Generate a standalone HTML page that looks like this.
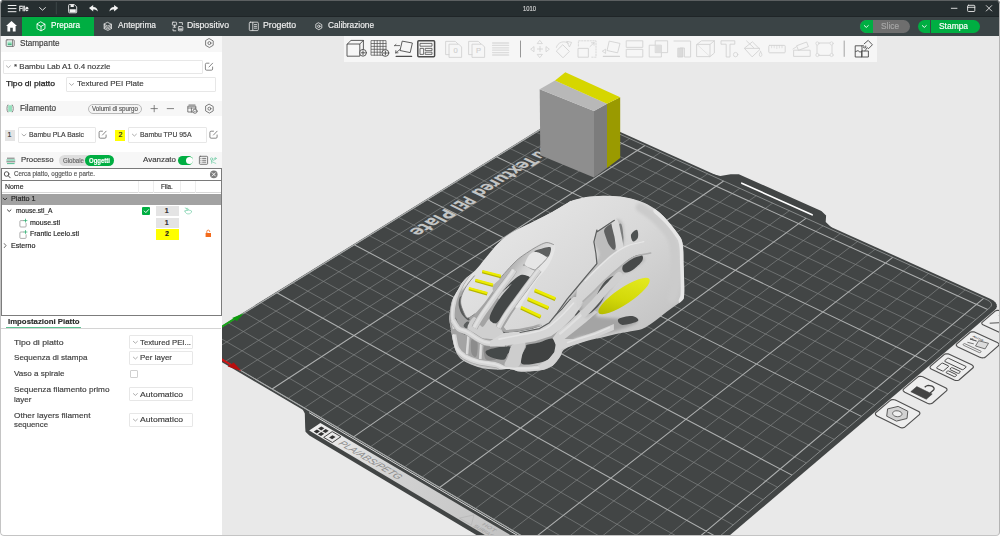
<!DOCTYPE html>
<html lang="it"><head><meta charset="utf-8"><title>1010</title>
<style>
*{box-sizing:border-box;margin:0;padding:0}
html,body{width:1000px;height:536px;overflow:hidden;background:#fff}
body{font-family:"Liberation Sans",sans-serif;font-size:9px;color:#333;position:relative}
#win{position:absolute;left:0;top:0;width:1000px;height:536px;border-radius:4px;overflow:hidden;background:#e9e9e9}
#frame{position:absolute;left:0;top:0;width:1000px;height:536px;border-radius:4px;border:1px solid #c4c4c4;border-top-color:#5c6061;border-right-color:#b4b4b4;pointer-events:none}
#frameL{position:absolute;left:0;top:3px;width:1px;height:33px;background:#878b8c}
.abs{position:absolute}
#title{position:absolute;left:0;top:0;width:1000px;height:17px;background:#262e30}
#tabs{position:absolute;left:0;top:17px;width:1000px;height:19px;background:#3b4446}
.tab{position:absolute;top:0;height:19px;line-height:19px;color:#f2f2f2;font-size:9.6px;white-space:nowrap}
#side{position:absolute;left:0;top:36px;width:222px;height:500px;background:#fff}
.hdr{position:absolute;left:0;width:222px;background:#f7f7f7}
.t{position:absolute;white-space:nowrap;line-height:1;-webkit-text-stroke:0.16px currentColor}
.combo{position:absolute;border:1px solid #e7e7e7;border-radius:1px;background:#fff}
svg{position:absolute;overflow:visible}
</style></head><body>
<div id="win">
<svg id="scene" width="1000" height="536" viewBox="0 0 1000 536" style="left:0;top:0">
<defs><clipPath id="cv"><rect x="222" y="36" width="778" height="500"/></clipPath></defs>
<g clip-path="url(#cv)">
<path d="M994.8,310.0L996.3,308.2L996.9,306.3L996.5,304.2L995.3,302.2L993.3,300.4L990.7,298.9L579.8,113.8L577.2,112.9L574.3,112.4L571.3,112.3L568.3,112.7L565.6,113.4L563.3,114.5L201.9,338.1L199.5,339.9L198.0,341.9L197.4,344.0L197.6,346.1L198.8,348.1L200.8,349.7L630.2,602.7L633.6,604.2L637.5,605.1L641.5,605.2L645.5,604.6L649.0,603.3L652.0,601.4Z" fill="#424545"/>
<path d="M710.4,173.6L720.3,176.0L730.7,174.3L738.8,174.2L821.4,211.1L826.1,215.6L825.7,222.0L832.9,228.8Z" fill="#424545"/>
<path d="M741.8,183.2L812.1,214.8" stroke="#fff" stroke-width="1.6" stroke-linecap="round" fill="none"/>
<path d="M302.5,409.0L304.8,413.5L305.2,427.7L305.5,431.7L309.4,435.4L710.6,674.7L727.5,659.3Z" fill="#424545"/>
<defs><linearGradient id="strip" gradientUnits="userSpaceOnUse" x1="310" y1="425" x2="500" y2="530"><stop offset="0" stop-color="#f0f0f0"/><stop offset="0.45" stop-color="#d2d2d2"/><stop offset="1" stop-color="#c4c4c4"/></linearGradient></defs>
<path d="M320.4,422.9L724.9,661.7L714.2,671.4L309.2,430.5Z" fill="url(#strip)"/>
<path d="M309.2,412.7L727.7,659.2" stroke="#e6e6e6" stroke-width="0.9" fill="none"/>
<path d="M210.0,352.4L584.4,118.2M211.6,333.1L655.2,591.0M225.3,361.4L599.3,124.9M228.2,322.8L671.2,577.4M240.7,370.5L614.4,131.7M244.6,312.7L687.0,564.0M256.3,379.7L629.6,138.6M260.9,302.6L702.6,550.8M288.1,398.3L660.3,152.5M292.7,282.9L733.2,524.9M304.2,407.8L675.9,159.5M308.4,273.2L748.2,512.2M320.5,417.4L691.7,166.6M323.8,263.6L763.0,499.6M337.0,427.1L707.6,173.8M339.1,254.2L777.6,487.3M370.4,446.8L739.8,188.3M369.2,235.6L806.3,463.0M387.4,456.8L756.2,195.7M384.0,226.4L820.3,451.1M404.6,466.9L772.7,203.1M398.6,217.4L834.2,439.4M422.0,477.2L789.3,210.7M413.1,208.4L847.9,427.8M457.4,498.0L823.1,225.9M441.5,190.8L874.7,405.1M475.4,508.6L840.3,233.6M455.5,182.2L887.9,393.9M493.6,519.3L857.6,241.4M469.3,173.6L900.9,382.9M512.0,530.1L875.1,249.3M483.0,165.2L913.8,372.0M549.4,552.1L910.5,265.3M509.9,148.5L939.0,350.6M568.5,563.3L928.5,273.5M523.1,140.3L951.4,340.1M587.7,574.7L946.7,281.7M536.2,132.2L963.7,329.8M607.2,586.1L965.1,289.9M549.2,124.2L975.8,319.5" stroke="#808383" stroke-width="0.7" fill="none"/>
<path d="M194.8,343.5L569.6,111.5M194.8,343.5L638.9,604.8M272.1,389.0L644.9,145.5M276.9,292.7L718.0,537.7M353.6,436.9L723.6,181.0M354.3,244.8L792.0,475.1M439.6,487.5L806.2,218.2M427.3,199.6L861.4,416.4M530.6,541.0L892.7,257.3M496.5,156.8L926.5,361.2M626.9,597.7L983.6,298.3M562.0,116.2L987.7,309.4" stroke="#adafaf" stroke-width="1.05" fill="none"/>
<path d="M990.1,307.4L991.1,306.2L991.5,304.9L991.3,303.6L990.5,302.2L989.1,301.0L987.4,300.0L575.5,114.2L573.8,113.6L571.9,113.3L569.9,113.2L567.9,113.5L566.1,113.9L564.6,114.7L201.6,339.3L200.0,340.5L199.0,341.9L198.6,343.3L198.8,344.7L199.5,346.0L200.9,347.0L630.9,600.1L633.2,601.1L635.8,601.7L638.5,601.8L641.1,601.4L643.5,600.5L645.4,599.2Z" stroke="#a4a6a6" stroke-width="0.7" fill="none"/>
<g id="platetext">
<text transform="matrix(-1.3027,0.8196,-1.4979,-0.6935,571.96,128.82)" x="0" y="0" font-family="'DejaVu Sans','Liberation Sans',sans-serif" font-weight="700" font-size="11.0" textLength="31.8" lengthAdjust="spacingAndGlyphs" fill="#c2c4c4">Bambu</text>
<text transform="matrix(-1.3586,0.8548,-1.5057,-0.7234,528.54,156.00)" x="0" y="0" font-family="'DejaVu Sans','Liberation Sans',sans-serif" font-weight="700" font-size="11.0" textLength="42.8" lengthAdjust="spacingAndGlyphs" fill="#c2c4c4">Textured</text>
<text transform="matrix(-1.4050,0.8841,-1.5112,-0.7482,465.60,195.50)" x="0" y="0" font-family="'DejaVu Sans','Liberation Sans',sans-serif" font-weight="700" font-size="11.0" textLength="11.8" lengthAdjust="spacingAndGlyphs" fill="#c2c4c4">PEI</text>
<text transform="matrix(-1.4390,0.9055,-1.5148,-0.7664,445.43,208.12)" x="0" y="0" font-family="'DejaVu Sans','Liberation Sans',sans-serif" font-weight="700" font-size="11.0" textLength="25.8" lengthAdjust="spacingAndGlyphs" fill="#c2c4c4">Plate</text>
<text transform="matrix(1.7044,1.0095,-1.6907,1.1916,337.63,443.96)" font-family="'Liberation Sans',sans-serif" font-style="italic" font-weight="400" font-size="4.6" textLength="35.5" lengthAdjust="spacingAndGlyphs" fill="#8a8a8a">PLA/ABS/PETG</text>
<text transform="matrix(1.8345,1.0840,-1.6718,1.2793,481.48,524.78)" font-family="'Liberation Sans',sans-serif" font-style="normal" font-weight="700" font-size="2.6" textLength="7.0" lengthAdjust="spacingAndGlyphs" fill="#aaaaaa">HOT</text>
<text transform="matrix(1.8363,1.0890,-1.6783,1.2851,472.77,526.44)" font-family="'Liberation Sans',sans-serif" font-style="normal" font-weight="700" font-size="2.6" textLength="12.0" lengthAdjust="spacingAndGlyphs" fill="#aaaaaa">SURFACE</text>
<path d="M321.3,426.4L324.4,428.3L321.2,430.5L318.1,428.6Z" fill="#333"/>
<path d="M316.9,429.4L320.0,431.3L316.8,433.5L313.7,431.6Z" fill="#333"/>
<path d="M325.6,429.0L328.7,430.8L325.5,433.0L322.4,431.2Z" fill="#333"/>
<path d="M321.2,432.0L324.3,433.8L321.1,436.1L317.9,434.2Z" fill="#333"/>
<path d="M332.2,431.6L340.9,436.7L332.4,442.5L323.7,437.4Z" fill="none" stroke="#333" stroke-width="0.9"/>
<path d="M332.5,435.2L335.5,437.0L332.1,439.3L329.1,437.6Z" fill="#333"/>
<path d="M459.5,518.1L471.3,525.1L474.0,514.9Z" fill="none" stroke="#b4b4b4" stroke-width="0.7"/>
</g>
<g id="plateicons">
<path d="M918.2,411.2L919.1,411.8L919.7,412.5L919.9,413.2L919.8,413.9L919.3,414.6L905.1,426.9L904.3,427.4L903.2,427.7L902.1,427.8L900.9,427.6L899.8,427.2L877.0,415.9L876.2,415.3L875.6,414.6L875.4,413.9L875.5,413.1L876.0,412.5L890.3,400.4L891.1,399.9L892.1,399.6L893.3,399.5L894.5,399.7L895.5,400.1Z" fill="#eeeeee" stroke="#505050" stroke-width="1.15"/>
<path d="M907.0,418.5L896.4,421.1L886.7,416.2L887.6,408.9L898.1,406.4L907.8,411.2Z" fill="#d2d2d2" stroke="#5a5a5a" stroke-width="1"/>
<path d="M901.2,415.6L900.2,416.2L898.9,416.6L897.4,416.7L896.0,416.5L894.6,416.0L893.6,415.3L892.9,414.4L892.6,413.5L892.8,412.6L893.4,411.8L894.4,411.2L895.7,410.8L897.1,410.8L898.6,411.0L899.9,411.5L901.0,412.2L901.7,413.0L902.0,413.9L901.8,414.8L901.2,415.6Z" fill="#efefef" stroke="#5a5a5a" stroke-width="0.9"/>
<path d="M945.4,387.7L946.2,388.2L946.8,388.9L947.0,389.6L946.9,390.3L946.4,390.9L932.6,403.0L931.8,403.4L930.8,403.7L929.7,403.8L928.5,403.6L927.4,403.2L904.8,392.2L903.9,391.6L903.4,391.0L903.1,390.2L903.3,389.5L903.8,388.9L917.7,377.1L918.5,376.6L919.5,376.4L920.6,376.3L921.7,376.5L922.8,376.8Z" fill="#eeeeee" stroke="#505050" stroke-width="1.15"/>
<path d="M916.8,386.6L932.2,394.1L926.3,399.2L910.8,391.7Z" fill="#444" stroke="#444" stroke-width="0.6"/>
<path d="M930.1,393.0L933.3,390.3L933.8,389.6L934.1,388.9L934.0,388.2L933.6,387.4L932.9,386.8L932.0,386.2L930.9,385.8L929.7,385.6L928.5,385.5L927.4,385.7L926.4,386.0L925.6,386.5L924.7,387.3" fill="none" stroke="#444" stroke-width="1.3"/>
<path d="M971.7,364.8L972.5,365.4L973.1,366.0L973.4,366.7L973.3,367.4L972.8,368.0L959.3,379.7L958.6,380.2L957.6,380.5L956.4,380.5L955.3,380.4L954.2,380.0L931.7,369.2L930.8,368.7L930.3,368.1L930.0,367.4L930.2,366.7L930.6,366.1L944.2,354.5L945.0,354.1L945.9,353.8L947.1,353.8L948.2,353.9L949.2,354.3Z" fill="#eeeeee" stroke="#505050" stroke-width="1.15"/>
<path d="M965.8,366.4L966.2,366.7L966.0,367.2L963.3,369.5L962.7,369.7L962.0,369.6L944.9,361.5L944.5,361.1L944.7,360.7L947.4,358.4L948.0,358.2L948.7,358.3Z" fill="none" stroke="#4c4c4c" stroke-width="1.0"/>
<path d="M948.3,365.8L948.7,366.1L948.6,366.5L943.5,370.9L942.9,371.1L942.3,370.9L936.9,368.4L936.5,368.0L936.6,367.6L941.7,363.3L942.2,363.1L942.9,363.2Z" fill="none" stroke="#4c4c4c" stroke-width="1.0"/>
<path d="M960.0,371.3L960.4,371.7L960.3,372.1L959.1,373.2L958.5,373.4L957.8,373.3L950.3,369.7L949.9,369.3L950.0,368.9L951.2,367.8L951.8,367.6L952.5,367.8Z" fill="none" stroke="#4c4c4c" stroke-width="1.0"/>
<path d="M956.3,374.6L956.7,375.0L956.6,375.4L955.3,376.5L954.7,376.7L954.0,376.5L946.5,372.9L946.1,372.6L946.2,372.1L947.5,371.1L948.1,370.9L948.8,371.0Z" fill="none" stroke="#4c4c4c" stroke-width="1.0"/>
<path d="M997.3,342.6L998.2,343.1L998.8,343.7L999.0,344.4L998.9,345.1L998.5,345.7L985.4,357.1L984.6,357.6L983.6,357.8L982.5,357.9L981.4,357.7L980.3,357.4L957.9,346.9L957.1,346.4L956.5,345.7L956.2,345.0L956.4,344.4L956.8,343.8L970.0,332.5L970.8,332.1L971.8,331.8L972.9,331.8L974.0,331.9L975.0,332.3Z" fill="#eeeeee" stroke="#505050" stroke-width="1.15"/>
<path d="M978.7,340.7L988.5,343.3L985.1,348.9L975.5,346.0Z" fill="#dcdcdc" stroke="#555" stroke-width="0.8"/>
<path d="M980.8,351.1L981.2,351.4L981.1,351.8L980.3,352.5L979.8,352.7L979.1,352.5L963.4,345.2L963.0,344.8L963.1,344.4L963.9,343.8L964.4,343.6L965.1,343.8Z" fill="none" stroke="#555" stroke-width="0.7"/>
<path d="M970.1,339.0L976.5,341.0L970.1,339.0L973.2,338.8" fill="none" stroke="#555" stroke-width="0.8"/>
<path d="M967.4,342.3L973.8,343.9" fill="none" stroke="#555" stroke-width="0.8"/>
<path d="M1022.4,320.9L1023.2,321.4L1023.8,322.0L1024.1,322.7L1024.0,323.3L1023.5,323.9L1010.7,335.0L1010.0,335.5L1009.0,335.8L1007.9,335.8L1006.8,335.7L1005.8,335.3L983.5,325.1L982.6,324.6L982.1,324.0L981.8,323.3L981.9,322.6L982.4,322.1L995.2,311.1L996.0,310.7L996.9,310.4L998.0,310.4L999.1,310.5L1000.2,310.9Z" fill="#eeeeee" stroke="#505050" stroke-width="1.15"/>
<path d="M999.2,315.1L1004.9,330.2M1014.4,322.0L989.7,323.2" fill="none" stroke="#555" stroke-width="1"/>
<text transform="matrix(1.9004,0.8798,-1.2171,1.0390,972.16,336.72)" font-family="'Liberation Sans',sans-serif" font-size="1.9" font-weight="700" fill="#555">AUTO</text>
</g>
<g id="axes">
<path d="M194.8,343.5L235.6,318.2" stroke="#19a519" stroke-width="2.0" stroke-linecap="butt"/>
<polygon points="232.1,318.1 243.8,313.2 237.0,321.0" fill="#0e9a0e"/>
<path d="M194.8,343.5L232.2,365.5" stroke="#d01414" stroke-width="2.0" stroke-linecap="butt"/>
<polygon points="227.6,366.5 241.5,370.9 233.7,362.6" fill="#b80e0e"/>
</g>
<g id="cube">
<polygon points="539.7,89.2 594,111 594,177.5 540.3,155.3" fill="#8e8e8e"/>
<polygon points="594,111 607,103.8 607,168 594,177.5" fill="#7c7c7c"/>
<polygon points="607,103.8 620.2,97.3 620.2,158 607,168" fill="#9a9a00"/>
<polygon points="539.7,89.2 555,80.4 607,103.8 594,111" fill="#b8b8b8"/>
<polygon points="555,80.4 565.3,72.3 620.2,97.3 607,103.8" fill="#d6d600"/>
</g>

<g id="mouse">
<defs>
<linearGradient id="mg" gradientUnits="userSpaceOnUse" x1="500" y1="215" x2="620" y2="370"><stop offset="0" stop-color="#e6e6e6"/><stop offset="0.5" stop-color="#d8d8d8"/><stop offset="1" stop-color="#c2c2c2"/></linearGradient>
<linearGradient id="ye" gradientUnits="userSpaceOnUse" x1="642" y1="280" x2="606" y2="312"><stop offset="0" stop-color="#e4ea20"/><stop offset="0.6" stop-color="#d2d808"/><stop offset="1" stop-color="#b4ba00"/></linearGradient>
<linearGradient id="sideg" gradientUnits="userSpaceOnUse" x1="640" y1="220" x2="690" y2="300"><stop offset="0" stop-color="#dcdcdc"/><stop offset="1" stop-color="#e8e8e8"/></linearGradient>
<filter id="b1" x="-20%" y="-20%" width="140%" height="140%"><feGaussianBlur stdDeviation="1.6"/></filter><filter id="b0" x="-20%" y="-20%" width="140%" height="140%"><feGaussianBlur stdDeviation="0.45"/></filter>
<clipPath id="msil"><path d="M570.0,201.2C568.1,202.3 563.7,205.2 559.4,207.7C555.1,210.2 549.5,213.5 544.5,216.1C539.5,218.8 534.5,221.1 529.6,223.6C524.6,226.1 519.0,228.6 514.6,231.0C510.3,233.5 506.9,235.7 503.4,238.5C500.0,241.3 497.2,244.4 494.1,247.8C491.0,251.3 487.9,255.3 484.8,259.0C481.7,262.8 478.9,266.7 475.4,270.2C472.0,273.7 467.2,276.7 464.3,280.0C461.3,283.3 459.7,286.8 457.7,290.3C455.7,293.7 453.4,297.3 452.1,300.5C450.9,303.8 450.7,306.7 450.3,309.9C449.8,313.0 449.2,315.8 449.3,319.2C449.5,322.6 450.6,326.6 451.2,330.4C451.8,334.1 452.3,338.1 453.1,341.6C453.8,345.0 454.6,348.1 455.9,350.9C457.1,353.7 458.2,356.2 460.5,358.4C462.9,360.5 466.4,362.4 469.9,364.0C473.3,365.5 476.7,366.8 481.0,367.7C485.4,368.6 491.0,369.3 496.0,369.6C500.9,369.8 506.9,368.8 510.9,369.2C514.9,369.5 516.4,371.3 519.9,371.6C523.3,372.0 528.1,371.6 531.8,371.3C535.5,371.1 538.8,371.1 542.2,370.1C545.7,369.2 549.7,367.9 552.7,365.7C555.7,363.4 558.2,359.5 560.1,356.7C562.1,354.0 561.4,351.5 564.6,349.3C567.9,347.0 574.6,345.0 579.6,343.3C584.5,341.6 590.9,340.0 594.5,339.1C598.1,338.2 597.5,338.7 601.0,337.8C604.6,337.0 611.0,335.2 616.0,334.1C620.9,333.0 626.5,332.2 630.9,331.3C635.2,330.4 639.0,330.0 642.1,328.9C645.2,327.8 646.4,326.9 649.6,324.8C652.7,322.7 657.0,319.2 660.7,316.4C664.5,313.6 668.4,310.6 671.9,308.0C675.5,305.3 680.2,302.7 682.2,300.5C684.2,298.3 683.8,298.3 684.1,294.9C684.4,291.5 684.2,285.3 684.1,280.0C684.0,274.7 683.7,268.6 683.5,263.4C683.4,258.1 683.5,252.5 683.1,248.4C682.8,244.4 682.5,242.1 681.3,239.1C680.0,236.2 677.8,233.7 675.7,230.7C673.5,227.8 671.0,224.5 668.2,221.4C665.4,218.3 662.3,214.9 658.9,212.1C655.5,209.3 651.7,206.7 647.7,204.6C643.6,202.5 639.3,200.9 634.6,199.6C630.0,198.2 625.0,197.2 619.7,196.6C614.4,195.9 608.5,195.7 602.9,195.8C597.3,195.9 591.4,196.3 586.1,197.1C580.8,198.0 573.9,200.2 571.2,200.9C568.5,201.5 572.0,200.0 570.0,201.2Z"/></clipPath>
</defs>
<path d="M570.0,201.2C568.1,202.3 563.7,205.2 559.4,207.7C555.1,210.2 549.5,213.5 544.5,216.1C539.5,218.8 534.5,221.1 529.6,223.6C524.6,226.1 519.0,228.6 514.6,231.0C510.3,233.5 506.9,235.7 503.4,238.5C500.0,241.3 497.2,244.4 494.1,247.8C491.0,251.3 487.9,255.3 484.8,259.0C481.7,262.8 478.9,266.7 475.4,270.2C472.0,273.7 467.2,276.7 464.3,280.0C461.3,283.3 459.7,286.8 457.7,290.3C455.7,293.7 453.4,297.3 452.1,300.5C450.9,303.8 450.7,306.7 450.3,309.9C449.8,313.0 449.2,315.8 449.3,319.2C449.5,322.6 450.6,326.6 451.2,330.4C451.8,334.1 452.3,338.1 453.1,341.6C453.8,345.0 454.6,348.1 455.9,350.9C457.1,353.7 458.2,356.2 460.5,358.4C462.9,360.5 466.4,362.4 469.9,364.0C473.3,365.5 476.7,366.8 481.0,367.7C485.4,368.6 491.0,369.3 496.0,369.6C500.9,369.8 506.9,368.8 510.9,369.2C514.9,369.5 516.4,371.3 519.9,371.6C523.3,372.0 528.1,371.6 531.8,371.3C535.5,371.1 538.8,371.1 542.2,370.1C545.7,369.2 549.7,367.9 552.7,365.7C555.7,363.4 558.2,359.5 560.1,356.7C562.1,354.0 561.4,351.5 564.6,349.3C567.9,347.0 574.6,345.0 579.6,343.3C584.5,341.6 590.9,340.0 594.5,339.1C598.1,338.2 597.5,338.7 601.0,337.8C604.6,337.0 611.0,335.2 616.0,334.1C620.9,333.0 626.5,332.2 630.9,331.3C635.2,330.4 639.0,330.0 642.1,328.9C645.2,327.8 646.4,326.9 649.6,324.8C652.7,322.7 657.0,319.2 660.7,316.4C664.5,313.6 668.4,310.6 671.9,308.0C675.5,305.3 680.2,302.7 682.2,300.5C684.2,298.3 683.8,298.3 684.1,294.9C684.4,291.5 684.2,285.3 684.1,280.0C684.0,274.7 683.7,268.6 683.5,263.4C683.4,258.1 683.5,252.5 683.1,248.4C682.8,244.4 682.5,242.1 681.3,239.1C680.0,236.2 677.8,233.7 675.7,230.7C673.5,227.8 671.0,224.5 668.2,221.4C665.4,218.3 662.3,214.9 658.9,212.1C655.5,209.3 651.7,206.7 647.7,204.6C643.6,202.5 639.3,200.9 634.6,199.6C630.0,198.2 625.0,197.2 619.7,196.6C614.4,195.9 608.5,195.7 602.9,195.8C597.3,195.9 591.4,196.3 586.1,197.1C580.8,198.0 573.9,200.2 571.2,200.9C568.5,201.5 572.0,200.0 570.0,201.2Z" fill="url(#mg)"/>
<g clip-path="url(#msil)">
<g filter="url(#b1)">
<path d="M640.2,207.4C642.4,208.9 649.2,213.3 653.3,216.7C657.3,220.1 661.4,224.2 664.5,227.9C667.6,231.6 670.2,235.1 671.9,239.1C673.7,243.1 674.2,247.5 674.7,252.2C675.3,256.8 675.3,261.2 675.3,267.1C675.3,273.0 675.3,282.2 674.7,287.5C674.2,292.7 672.4,296.8 671.9,298.7" stroke="#cbcbcb" stroke-width="9" fill="none" stroke-linecap="round" stroke-linejoin="round" />
</g>
<g filter="url(#b0)">
<path d="M657.0,210.7C658.9,212.5 665.1,218.1 668.2,221.4C671.3,224.7 673.5,227.8 675.7,230.7C677.8,233.7 680.0,236.2 681.3,239.1C682.5,242.1 682.8,244.4 683.1,248.4C683.5,252.5 683.4,258.1 683.5,263.4C683.7,268.6 684.0,274.7 684.1,280.0C684.2,285.3 684.4,291.5 684.1,294.9C683.8,298.3 682.5,299.6 682.2,300.5" stroke="#e6e6e6" stroke-width="7" fill="none" stroke-linecap="round" stroke-linejoin="round" />
</g>
<g filter="url(#b1)">
<path d="M456.8,295.5C459.4,290.4 460.0,290.6 464.6,288.6C469.2,286.7 476.7,285.8 484.2,283.7C491.7,281.6 500.9,278.2 509.7,275.9C518.5,273.6 532.1,261.7 537.2,270.0C542.2,278.3 536.9,318.7 540.0,325.9C543.1,333.1 551.1,317.2 555.7,313.1C560.3,309.1 563.5,305.6 567.5,301.4C571.4,297.1 575.0,292.9 579.2,287.6C583.5,282.4 589.7,273.7 592.9,270.0C596.1,266.3 596.5,268.0 598.4,265.3C600.3,262.5 602.0,254.2 604.3,253.5C606.6,252.9 613.4,258.0 612.2,261.4C610.9,264.8 594.8,273.1 596.8,273.8C598.8,274.6 622.9,262.1 624.2,266.0C625.5,269.9 609.2,289.5 604.6,297.4C600.0,305.2 597.7,309.8 596.8,313.0C595.8,316.3 594.6,316.1 598.8,317.1C603.1,318.1 615.8,318.3 622.4,319.0C628.9,319.7 638.0,319.7 638.0,321.4C638.0,323.0 628.9,326.6 622.4,328.8C615.8,331.0 606.7,333.1 598.8,334.7C591.0,336.3 583.1,335.0 575.3,338.6C567.5,342.2 557.6,352.4 551.8,356.3C545.9,360.2 541.1,361.2 540.0,362.2C538.9,363.1 551.0,361.2 545.0,362.2C539.0,363.1 516.6,368.0 503.8,368.0C491.1,368.0 477.4,366.1 468.5,362.2C459.7,358.2 454.2,351.7 450.9,344.5C447.6,337.3 447.9,327.2 448.9,319.0C449.9,310.8 454.2,300.6 456.8,295.5Z" fill="#a4a4a4" />
</g>
<g filter="url(#b0)">
<path d="M459.7,297.5C459.1,298.9 458.4,302.5 458.7,305.3C459.1,308.1 460.2,311.7 461.7,314.1C463.1,316.6 466.2,319.2 467.5,320.0C468.9,320.8 470.0,320.3 469.5,319.0C469.0,317.7 465.9,314.8 464.6,312.2C463.3,309.5 462.0,305.9 461.7,303.3C461.3,300.7 463.0,297.5 462.6,296.5C462.3,295.5 460.4,296.0 459.7,297.5Z" fill="#585a5a" />
<path d="M467.5,321.4C469.0,321.3 472.3,324.1 472.5,325.3C472.6,326.5 470.0,328.7 468.5,328.8C467.1,328.9 463.8,327.1 463.6,325.9C463.5,324.6 466.1,321.5 467.5,321.4Z" fill="#5a5c5c" />
<path d="M452.8,319.0C453.0,320.8 454.8,326.2 456.8,328.8C458.7,331.4 462.9,334.0 464.6,334.7C466.3,335.4 467.8,334.4 467.0,333.1C466.1,331.8 461.6,329.4 459.7,326.9C457.8,324.3 456.9,319.3 455.8,318.0C454.6,316.7 452.7,317.2 452.8,319.0Z" fill="#5c5e5e" />
<path d="M471.5,339.6C472.5,337.8 476.5,339.8 477.4,342.5C478.2,345.3 477.4,354.5 476.4,356.3C475.4,358.1 472.3,356.1 471.5,353.3C470.7,350.6 470.5,341.4 471.5,339.6Z" fill="#8c8c8c" />
<path d="M485.2,345.5C488.1,344.3 499.7,345.3 501.9,347.5C504.0,349.6 500.4,356.1 497.9,358.2C495.5,360.4 489.4,360.8 487.2,360.2C484.9,359.5 484.5,356.8 484.2,354.3C483.9,351.9 482.3,346.6 485.2,345.5Z" fill="#8a8a8a" />
<path d="M570.6,299.3C569.2,300.9 565.2,306.0 562.4,309.3C559.5,312.5 556.5,315.8 553.4,318.5C550.4,321.2 547.7,323.6 544.2,325.4C540.6,327.2 536.6,328.1 532.1,329.3C527.5,330.4 521.4,331.6 516.9,332.2C512.3,332.9 507.5,333.5 504.6,333.0C501.7,332.5 500.4,330.0 499.6,329.4" stroke="#4a4c4c" stroke-width="1.6" fill="none" stroke-linecap="round" stroke-linejoin="round" />
<path d="M490.0,349.3C493.2,348.3 501.2,346.5 504.9,346.3C508.7,346.0 511.9,346.5 512.4,347.8C512.9,349.0 509.4,351.7 507.9,353.7C506.4,355.7 506.4,359.2 503.4,359.7C500.4,360.2 493.0,358.0 490.0,356.7C487.0,355.5 485.5,353.5 485.5,352.2C485.5,351.0 486.8,350.2 490.0,349.3Z" fill="#454848" />
<path d="M527.3,344.8C529.6,343.9 535.0,343.5 539.3,342.5C543.5,341.5 550.0,337.7 552.7,338.8C555.4,339.9 556.2,346.0 555.7,349.3C555.2,352.5 552.4,356.0 549.7,358.2C547.0,360.4 543.7,361.7 539.3,362.7C534.8,363.7 525.8,365.2 522.8,364.2C519.9,363.2 520.8,359.5 521.3,356.7C521.8,354.0 524.8,349.8 525.8,347.8C526.8,345.8 525.1,345.6 527.3,344.8Z" fill="#3f4242" />
<path d="M572.4,308.2C573.2,307.4 577.9,308.9 579.2,310.2C580.5,311.5 581.0,315.3 580.2,316.1C579.4,316.9 575.6,316.4 574.3,315.1C573.0,313.8 571.5,309.1 572.4,308.2Z" fill="#555757" />
<path d="M596.9,289.6C597.2,287.6 602.7,281.8 604.7,280.8C606.7,279.8 609.0,281.8 608.6,283.7C608.3,285.7 604.7,291.6 602.7,292.5C600.8,293.5 596.5,291.6 596.9,289.6Z" fill="#606262" />
<path d="M618.4,319.0C620.1,317.5 628.9,315.8 632.2,316.1C635.4,316.4 639.7,319.5 638.0,321.0C636.4,322.5 625.6,325.2 622.4,324.9C619.1,324.6 616.8,320.5 618.4,319.0Z" fill="#4a4c4c" />
</g>
<g filter="url(#b0)">
<path d="M472.5,268.0C470.7,270.7 464.6,278.5 461.7,283.7C458.7,289.0 456.3,294.2 454.8,299.4C453.3,304.6 452.5,310.2 452.5,315.1C452.5,320.0 454.4,326.5 454.8,328.8" stroke="#a2a2a2" stroke-width="5.2" fill="none" stroke-linecap="butt" stroke-linejoin="round" />
<path d="M472.5,268.0C470.7,270.7 464.6,278.5 461.7,283.7C458.7,289.0 456.3,294.2 454.8,299.4C453.3,304.6 452.5,310.2 452.5,315.1C452.5,320.0 454.4,326.5 454.8,328.8" stroke="#d4d4d4" stroke-width="4.2" fill="none" stroke-linecap="butt" stroke-linejoin="round" />
<path d="M472.1,267.5C470.3,270.2 464.2,278.0 461.3,283.2C458.3,288.5 455.9,293.7 454.4,298.9C452.9,304.1 452.1,309.7 452.1,314.6C452.1,319.5 454.0,326.0 454.4,328.3" stroke="#e0e0e0" stroke-width="1.6800000000000002" fill="none" stroke-linecap="butt" stroke-linejoin="round" />
<path d="M453.8,334.7C454.3,337.0 455.0,344.8 456.8,348.4C458.6,352.0 461.0,354.1 464.6,356.3C468.2,358.5 473.1,360.3 478.3,361.8C483.6,363.2 491.5,363.8 496.0,364.9C500.4,366.0 500.9,367.7 504.9,368.4C508.9,369.0 514.1,369.0 519.9,369.0C525.6,368.9 534.3,368.8 539.3,367.9C544.2,367.0 547.0,365.2 549.7,363.4C552.4,361.7 554.7,358.5 555.7,357.5" stroke="#a2a2a2" stroke-width="6.0" fill="none" stroke-linecap="butt" stroke-linejoin="round" />
<path d="M453.8,334.7C454.3,337.0 455.0,344.8 456.8,348.4C458.6,352.0 461.0,354.1 464.6,356.3C468.2,358.5 473.1,360.3 478.3,361.8C483.6,363.2 491.5,363.8 496.0,364.9C500.4,366.0 500.9,367.7 504.9,368.4C508.9,369.0 514.1,369.0 519.9,369.0C525.6,368.9 534.3,368.8 539.3,367.9C544.2,367.0 547.0,365.2 549.7,363.4C552.4,361.7 554.7,358.5 555.7,357.5" stroke="#d6d6d6" stroke-width="5.0" fill="none" stroke-linecap="butt" stroke-linejoin="round" />
<path d="M453.4,334.2C453.9,336.5 454.6,344.3 456.4,347.9C458.2,351.5 460.6,353.6 464.2,355.8C467.8,358.0 472.7,359.8 477.9,361.3C483.2,362.7 491.1,363.3 495.6,364.4C500.0,365.5 500.5,367.2 504.5,367.9C508.5,368.5 513.7,368.5 519.5,368.5C525.2,368.4 533.9,368.3 538.9,367.4C543.8,366.5 546.6,364.7 549.3,362.9C552.0,361.2 554.3,358.0 555.3,357.0" stroke="#e2e2e2" stroke-width="2.0" fill="none" stroke-linecap="butt" stroke-linejoin="round" />
<path d="M468.5,335.7C468.3,338.8 467.2,351.2 467.0,354.3" stroke="#a2a2a2" stroke-width="3.6" fill="none" stroke-linecap="butt" stroke-linejoin="round" />
<path d="M468.5,335.7C468.3,338.8 467.2,351.2 467.0,354.3" stroke="#d4d4d4" stroke-width="2.6" fill="none" stroke-linecap="butt" stroke-linejoin="round" />
<path d="M468.1,335.2C467.9,338.3 466.8,350.7 466.6,353.8" stroke="#e0e0e0" stroke-width="1.04" fill="none" stroke-linecap="butt" stroke-linejoin="round" />
<path d="M481.3,342.9C481.1,345.7 480.5,356.5 480.3,359.2" stroke="#a2a2a2" stroke-width="3.8" fill="none" stroke-linecap="butt" stroke-linejoin="round" />
<path d="M481.3,342.9C481.1,345.7 480.5,356.5 480.3,359.2" stroke="#d4d4d4" stroke-width="2.8" fill="none" stroke-linecap="butt" stroke-linejoin="round" />
<path d="M480.9,342.4C480.7,345.2 480.1,356.0 479.9,358.7" stroke="#e0e0e0" stroke-width="1.1199999999999999" fill="none" stroke-linecap="butt" stroke-linejoin="round" />
<path d="M512.4,344.8C515.2,342.5 523.5,341.2 525.1,343.0C526.7,344.7 523.2,351.3 522.1,355.2C521.0,359.1 521.2,364.7 518.4,366.4C515.5,368.2 506.7,367.3 504.9,365.7C503.2,364.1 506.7,360.2 507.9,356.7C509.2,353.2 509.5,347.1 512.4,344.8Z" fill="#cdcdcd" />
<path d="M587.0,306.0L597.5,311.9L585.5,322.4L573.6,332.1L564.6,339.1L573.6,339.1L594.5,332.1L613.9,323.9L613.9,329.9L594.5,338.1L573.6,344.8L561.6,349.3L560.1,356.7L552.7,365.7L542.2,370.4L537.8,365.7L548.2,359.7L554.2,352.2L555.7,344.8L552.7,338.1L557.2,332.1L570.6,320.9L581.0,310.4Z" fill="#d3d3d3" />
<path d="M587.8,309.0C586.4,310.2 582.4,313.8 579.6,316.4C576.7,319.0 573.8,321.8 570.6,324.6C567.4,327.5 561.9,332.1 560.1,333.6" stroke="#e0e0e0" stroke-width="2.2" fill="none" stroke-linecap="round" stroke-linejoin="round" />
<path d="M567.6,342.5C569.6,341.9 575.1,339.9 579.6,338.5C584.0,337.1 589.5,335.8 594.5,334.0C599.5,332.2 606.9,328.7 609.4,327.6" stroke="#e2e2e2" stroke-width="1.6" fill="none" stroke-linecap="round" stroke-linejoin="round" />
<path d="M467.5,326.9C468.2,324.2 472.0,317.1 474.4,317.1C476.9,317.1 479.7,326.6 482.3,326.9C484.8,327.1 487.4,319.0 489.7,318.6C492.1,318.2 494.5,322.8 496.4,324.5C498.2,326.2 499.6,326.6 500.9,328.8C502.1,331.0 506.6,336.0 503.8,337.6C501.0,339.3 489.8,339.4 484.2,338.6C478.7,337.8 473.3,334.7 470.5,332.7C467.7,330.8 466.9,329.5 467.5,326.9Z" fill="#cfcfcf" />
<path d="M452.8,320.0C453.8,321.5 456.3,326.8 458.7,328.8C461.2,330.9 463.3,330.1 467.5,332.4C471.8,334.6 478.2,340.3 484.2,342.2C490.3,344.1 500.4,343.5 503.8,343.7C507.3,344.0 504.7,343.6 504.9,343.6" stroke="#a2a2a2" stroke-width="6.2" fill="none" stroke-linecap="butt" stroke-linejoin="round" />
<path d="M452.8,320.0C453.8,321.5 456.3,326.8 458.7,328.8C461.2,330.9 463.3,330.1 467.5,332.4C471.8,334.6 478.2,340.3 484.2,342.2C490.3,344.1 500.4,343.5 503.8,343.7C507.3,344.0 504.7,343.6 504.9,343.6" stroke="#d4d4d4" stroke-width="5.2" fill="none" stroke-linecap="butt" stroke-linejoin="round" />
<path d="M452.4,319.5C453.4,321.0 455.9,326.3 458.3,328.3C460.8,330.4 462.9,329.6 467.1,331.9C471.4,334.1 477.8,339.8 483.8,341.7C489.9,343.6 500.0,343.0 503.4,343.2C506.9,343.5 504.3,343.1 504.5,343.1" stroke="#e0e0e0" stroke-width="2.08" fill="none" stroke-linecap="butt" stroke-linejoin="round" />
<path d="M573.6,297.0L569.6,300.4L562.1,309.4L553.1,318.4L544.2,325.1L532.2,328.8L517.3,331.8L504.9,332.7L499.0,335.8L490.0,340.9L490.0,346.6L516.9,344.3L534.8,341.3L551.2,336.1L561.6,328.7L573.6,316.7L582.5,304.8L587.0,297.0Z" fill="#d6d6d6" />
<path d="M573.6,303.0C572.1,304.6 567.9,309.5 564.6,312.7C561.4,315.9 557.5,319.7 554.2,322.4C550.8,325.1 548.1,327.4 544.5,329.1C540.9,330.8 537.0,331.5 532.5,332.5C528.1,333.6 523.2,334.4 517.6,335.5C512.0,336.6 502.1,338.5 499.0,339.1" stroke="#e4e4e4" stroke-width="1.6" fill="none" stroke-linecap="round" stroke-linejoin="round" />
</g>
<g filter="url(#b0)">
<g filter="url(#b1)">
<path d="M596.8,231.7C600.2,227.9 610.2,221.4 614.4,219.9C618.7,218.4 620.6,219.7 622.3,222.8C623.9,225.9 623.9,233.3 624.2,238.5C624.5,243.8 622.6,251.1 624.2,254.2C625.8,257.3 630.8,256.7 634.0,257.2C637.3,257.6 642.2,256.3 643.8,257.2C645.5,258.0 645.5,260.1 643.8,262.1C642.2,264.0 637.3,267.0 634.0,268.9C630.8,270.9 627.5,272.7 624.2,273.8C620.9,275.0 617.7,271.9 614.4,275.8C611.1,279.7 608.2,291.1 604.6,297.4C601.0,303.6 596.1,309.8 592.8,313.0C589.6,316.3 587.0,319.2 585.0,317.0C583.0,314.7 581.1,306.5 581.1,299.3C581.1,292.1 582.1,281.0 585.0,273.8C587.9,266.6 597.3,261.4 598.7,256.2C600.2,250.9 594.2,246.5 593.8,242.5C593.5,238.4 593.3,235.4 596.8,231.7Z" fill="#bdbdbd" />
</g>
<path d="M604.6,229.1C606.0,226.8 612.4,222.0 614.4,223.2C616.4,224.5 616.7,232.2 616.8,236.6C616.8,240.9 616.0,248.1 614.8,249.5C613.6,250.9 610.8,247.3 609.3,245.2C607.8,243.1 606.6,239.6 605.8,237.0C605.0,234.3 603.2,231.4 604.6,229.1Z" fill="#5e6060" />
<path d="M618.7,225.8C619.0,223.3 620.7,222.6 621.5,224.4C622.3,226.2 623.2,232.7 623.4,236.6C623.6,240.4 623.2,246.9 622.6,247.4C622.1,247.8 620.6,243.1 619.9,239.5C619.2,235.9 618.5,228.3 618.7,225.8Z" fill="#7c7e7e" />
<path d="M631.1,234.6C631.7,232.6 635.8,229.2 637.0,229.7C638.1,230.2 638.6,235.6 637.9,237.5C637.3,239.5 634.2,242.0 633.0,241.5C631.9,241.0 630.4,236.6 631.1,234.6Z" fill="#505252" />
<path d="M627.2,259.1C630.2,256.9 637.7,254.4 640.3,254.6C642.9,254.8 643.6,257.7 642.6,260.1C641.7,262.5 637.2,266.6 634.4,268.7C631.6,270.8 627.8,272.8 625.8,272.6C623.8,272.5 622.0,270.2 622.3,267.9C622.5,265.7 624.2,261.3 627.2,259.1Z" fill="#474949" />
<path d="M604.6,281.7C607.5,278.4 613.1,275.5 614.4,275.8C615.7,276.1 614.4,280.7 612.5,283.6C610.5,286.6 605.3,291.5 602.6,293.4C600.0,295.4 596.4,297.4 596.8,295.4C597.1,293.4 601.7,284.9 604.6,281.7Z" fill="#505252" />
<path d="M596.8,299.3C600.0,296.0 604.0,292.8 604.6,293.4C605.3,294.1 603.0,300.0 600.7,303.2C598.4,306.5 593.5,311.4 590.9,313.0C588.3,314.7 584.0,315.3 585.0,313.0C586.0,310.8 593.5,302.6 596.8,299.3Z" fill="#565858" />
<path d="M611.5,221.9C612.0,219.1 615.7,217.8 617.4,219.9C619.0,222.0 620.3,229.7 621.3,234.6C622.3,239.5 623.9,246.4 623.2,249.3C622.6,252.3 618.8,254.4 617.4,252.3C615.9,250.1 615.4,241.6 614.4,236.6C613.4,231.5 611.0,224.6 611.5,221.9Z" fill="#d9d9d9" />
<linearGradient id="armg" gradientUnits="userSpaceOnUse" x1="610" y1="250" x2="625" y2="275"><stop offset="0" stop-color="#e2e2e2"/><stop offset="1" stop-color="#c4c4c4"/></linearGradient>
<path d="M649.7,239.5C648.1,238.5 647.4,239.7 643.8,240.5C640.2,241.3 633.0,242.5 628.1,244.4C623.2,246.4 619.0,249.0 614.4,252.3C609.8,255.5 605.6,259.4 600.7,264.0C595.8,268.6 588.9,275.5 585.0,279.7C581.1,284.0 578.5,284.9 577.2,289.5C575.8,294.1 575.8,305.5 577.2,307.2C578.5,308.8 582.7,301.6 585.0,299.3C587.3,297.0 587.6,296.7 590.9,293.4C594.2,290.2 599.7,284.3 604.6,279.7C609.5,275.1 615.4,269.9 620.3,266.0C625.2,262.1 629.1,258.4 634.0,256.2C638.9,254.0 646.4,254.3 649.7,252.6C653.0,251.0 653.6,248.6 653.6,246.4C653.6,244.2 651.3,240.5 649.7,239.5Z" fill="url(#mg)" />
<path d="M650.7,253.0C647.9,253.7 639.1,254.7 634.0,257.0C629.0,259.2 625.2,262.8 620.3,266.8C615.4,270.7 609.5,275.9 604.6,280.5C599.7,285.1 594.5,290.8 590.9,294.2C587.3,297.7 584.3,300.1 583.0,301.3" stroke="#b0b0b0" stroke-width="1.6" fill="none" stroke-linecap="round" stroke-linejoin="round" />
<path d="M643.8,241.7C641.2,242.3 633.0,243.6 628.1,245.6C623.2,247.5 619.0,250.2 614.4,253.4C609.8,256.7 605.6,260.6 600.7,265.2C595.8,269.8 587.6,278.3 585.0,280.9" stroke="#e6e6e6" stroke-width="1.2" fill="none" stroke-linecap="round" stroke-linejoin="round" />
<path d="M618.3,271.9C615.7,272.8 610.8,279.1 606.6,283.6C602.3,288.2 596.4,295.4 592.8,299.3C589.2,303.2 587.0,304.9 585.0,307.2C583.0,309.4 581.1,311.4 581.1,313.0C581.1,314.7 582.4,318.3 585.0,317.0C587.6,315.7 592.8,309.4 596.8,305.2C600.7,300.9 604.3,296.0 608.5,291.5C612.8,286.9 620.6,281.0 622.3,277.7C623.9,274.5 620.9,270.9 618.3,271.9Z" fill="#d0d0d0" />
</g>
<path d="M570.0,201.2L559.4,207.7L544.5,216.1L529.6,223.6L514.6,231.0L503.4,238.5L494.1,247.8L516.1,256.5L531.8,247.6L545.5,242.7L554.3,245.7L555.3,249.6L551.4,261.4L543.5,273.1L531.8,284.9L520.0,296.7L531.3,284.7L521.5,299.4L511.7,314.1L503.8,326.9L506.2,330.0L519.5,328.8L533.2,325.9L545.0,322.0L539.6,328.0L549.4,322.2L557.3,312.4L567.1,298.6L576.9,286.9L586.7,275.1L596.5,263.3L595.5,253.5L593.5,241.8L596.5,230.0L596.8,231.7L614.4,219.9L634.6,199.6L619.7,196.6L602.9,195.8L586.1,197.1L571.2,200.9Z" fill="url(#mg)" />
<path d="M520.0,332.5L539.6,328.6L549.4,322.7L557.3,312.9L567.1,299.2L576.9,287.5L586.7,275.7L596.9,263.7L595.9,253.5L593.9,241.8L596.9,230.0L596.8,232.1L614.4,220.3" stroke="#5c5e5e" stroke-width="1.2" fill="none" stroke-linecap="round" stroke-linejoin="round" />
<path d="M490.1,256.3C486.2,259.1 482.9,265.8 480.3,269.0C477.7,272.3 476.7,273.1 474.4,275.9C472.1,278.7 468.7,282.4 466.6,285.7C464.4,289.0 462.6,292.5 461.7,295.5C460.7,298.4 460.4,300.6 460.7,303.3C461.0,306.1 462.5,309.7 463.6,312.2C464.8,314.6 465.8,317.7 467.5,318.0C469.3,318.4 471.6,316.6 474.4,314.1C477.2,311.7 480.9,307.4 484.2,303.3C487.5,299.2 490.8,293.9 494.0,289.6C497.3,285.4 501.0,281.3 503.8,277.8C506.6,274.4 508.4,272.3 510.7,269.0C513.0,265.8 518.7,261.0 517.5,258.2C516.4,255.5 508.4,252.7 503.8,252.4C499.2,252.0 494.0,253.5 490.1,256.3Z" fill="url(#mg)" />
<path d="M474.4,275.9C473.1,277.5 468.7,282.4 466.6,285.7C464.4,289.0 462.6,292.5 461.7,295.5C460.7,298.4 460.4,300.6 460.7,303.3C461.0,306.1 462.5,309.7 463.6,312.2C464.8,314.6 465.8,317.7 467.5,318.0C469.3,318.4 473.3,314.8 474.4,314.1" stroke="#7a7a7a" stroke-width="0.8" fill="none" stroke-linecap="round" stroke-linejoin="round" />
<linearGradient id="slotg" gradientUnits="userSpaceOnUse" x1="520" y1="255" x2="540" y2="270"><stop offset="0" stop-color="#b4b4b4"/><stop offset="0.45" stop-color="#d2d2d2"/><stop offset="1" stop-color="#e6e6e6"/></linearGradient>
<path d="M553.4,244.7C551.9,244.0 548.9,242.5 546.1,242.9C543.3,243.3 539.6,245.4 536.4,247.1C533.2,248.9 529.7,251.2 526.7,253.2C523.7,255.2 521.0,256.8 518.2,259.3C515.4,261.7 512.7,264.5 509.7,267.8C506.7,271.0 502.8,275.5 500.0,278.7C497.2,281.9 493.1,283.9 492.7,287.2C492.3,290.4 493.5,294.7 497.6,298.1C501.6,301.5 512.5,307.5 517.0,307.8C521.4,308.1 521.8,303.5 524.3,300.0C526.7,296.6 528.9,291.1 531.6,287.2C534.2,283.2 537.2,279.9 540.0,276.3C542.9,272.6 546.3,269.0 548.5,265.3C550.8,261.7 552.3,257.5 553.4,254.4C554.5,251.4 555.2,248.8 555.2,247.1C555.2,245.5 554.9,245.4 553.4,244.7Z" fill="url(#slotg)" />
<path d="M553.4,244.5C552.2,244.2 548.9,242.2 546.1,242.6C543.3,243.1 539.6,245.2 536.4,246.9C533.2,248.6 529.7,250.9 526.7,253.0C523.7,255.0 521.0,256.6 518.2,259.0C515.4,261.5 512.7,264.3 509.7,267.5C506.7,270.8 501.6,276.6 500.0,278.4" stroke="#8c8c8c" stroke-width="0.9" fill="none" stroke-linecap="round" stroke-linejoin="round" />
<path d="M535.2,250.8C537.2,249.9 545.9,247.4 548.5,247.1C551.2,246.8 550.9,247.5 551.0,249.0C551.1,250.4 550.0,254.1 549.2,255.6C548.3,257.1 547.4,258.3 546.1,258.1C544.8,257.9 542.9,255.3 541.3,254.4C539.6,253.5 537.4,253.2 536.4,252.6C535.4,252.0 533.2,251.7 535.2,250.8Z" fill="#5e6060" />
<path d="M520.6,275.0C523.5,274.0 526.3,275.3 527.9,276.0C529.6,276.8 530.9,278.0 530.6,279.7C530.3,281.3 528.0,283.5 526.1,286.0C524.2,288.4 519.9,294.2 519.4,294.5C519.0,294.7 524.4,286.5 523.4,287.6C522.5,288.8 516.9,296.8 513.6,301.4C510.4,305.9 506.7,311.5 503.8,315.1C500.9,318.7 498.5,321.9 496.4,322.9C494.2,324.0 492.2,322.4 491.1,321.4C490.0,320.4 489.2,319.4 489.7,317.1C490.2,314.7 492.0,310.8 494.0,307.3C496.0,303.7 498.9,299.4 501.9,295.5C504.8,291.6 511.6,284.3 511.7,283.7C511.8,283.2 502.6,292.3 502.4,292.0C502.3,291.8 507.9,285.2 510.9,282.3C514.0,279.5 517.8,276.1 520.6,275.0Z" fill="#444747" />
<path d="M524.3,264.1C521.0,265.7 524.4,265.3 526.1,266.3C527.8,267.4 532.4,270.0 534.2,270.4C536.0,270.9 534.8,271.1 536.9,269.2C539.0,267.4 545.1,261.3 546.6,259.3C548.1,257.2 549.6,256.0 545.9,256.8C542.2,257.7 527.6,262.5 524.3,264.1Z" fill="#9c9c9c" />
<path d="M529.7,254.4C531.7,252.5 533.8,251.7 536.4,252.0C539.0,252.3 543.9,255.1 545.5,256.2C547.1,257.4 547.6,256.6 546.1,258.7C544.6,260.7 538.4,266.6 536.4,268.4C534.4,270.1 535.7,269.6 534.0,269.2C532.3,268.8 527.6,266.9 526.1,265.9C524.6,265.0 524.3,265.4 524.9,263.5C525.5,261.6 527.8,256.3 529.7,254.4Z" fill="#e6e6e6" />
<g filter="url(#b0)">
<path d="M514.0,270.0C513.6,270.7 514.0,270.7 511.7,273.9C509.3,277.2 503.7,284.4 499.9,289.6C496.1,294.8 492.3,300.3 489.1,304.9C485.9,309.5 483.1,313.2 480.7,317.1C478.2,320.9 475.5,326.0 474.4,327.8" stroke="#a2a2a2" stroke-width="6.4" fill="none" stroke-linecap="butt" stroke-linejoin="round" />
<path d="M514.0,270.0C513.6,270.7 514.0,270.7 511.7,273.9C509.3,277.2 503.7,284.4 499.9,289.6C496.1,294.8 492.3,300.3 489.1,304.9C485.9,309.5 483.1,313.2 480.7,317.1C478.2,320.9 475.5,326.0 474.4,327.8" stroke="#d4d4d4" stroke-width="5.4" fill="none" stroke-linecap="butt" stroke-linejoin="round" />
<path d="M513.6,269.5C513.2,270.2 513.6,270.2 511.3,273.4C508.9,276.7 503.3,283.9 499.5,289.1C495.7,294.3 491.9,299.8 488.7,304.4C485.5,309.0 482.7,312.7 480.3,316.6C477.8,320.4 475.1,325.5 474.0,327.3" stroke="#e0e0e0" stroke-width="2.16" fill="none" stroke-linecap="butt" stroke-linejoin="round" />
<path d="M539.1,270.0C538.8,270.4 539.4,269.4 537.2,272.4C534.9,275.3 529.4,282.8 525.8,287.6C522.2,292.5 518.9,296.8 515.6,301.4C512.3,305.9 508.7,310.7 505.8,315.1C502.9,319.5 499.6,325.7 498.3,327.8" stroke="#a2a2a2" stroke-width="6.0" fill="none" stroke-linecap="butt" stroke-linejoin="round" />
<path d="M539.1,270.0C538.8,270.4 539.4,269.4 537.2,272.4C534.9,275.3 529.4,282.8 525.8,287.6C522.2,292.5 518.9,296.8 515.6,301.4C512.3,305.9 508.7,310.7 505.8,315.1C502.9,319.5 499.6,325.7 498.3,327.8" stroke="#d4d4d4" stroke-width="5.0" fill="none" stroke-linecap="butt" stroke-linejoin="round" />
<path d="M538.7,269.5C538.4,269.9 539.0,268.9 536.8,271.9C534.5,274.8 529.0,282.3 525.4,287.1C521.8,292.0 518.5,296.3 515.2,300.9C511.9,305.4 508.3,310.2 505.4,314.6C502.5,319.0 499.2,325.2 497.9,327.3" stroke="#e0e0e0" stroke-width="2.0" fill="none" stroke-linecap="butt" stroke-linejoin="round" />
</g>
<ellipse cx="624" cy="296" rx="30.5" ry="8.2" transform="rotate(-33.7 624 296)" fill="url(#ye)"/>
<path d="M482.3,271.9L500.9,276.8" stroke="#b4b400" stroke-width="2.9"/>
<path d="M482.3,271.0L500.9,275.9" stroke="#ecec00" stroke-width="2.3"/>
<path d="M475.4,280.7L493.0,285.6" stroke="#b4b400" stroke-width="2.9"/>
<path d="M475.4,279.8L493.0,284.7" stroke="#ecec00" stroke-width="2.3"/>
<path d="M468.9,288.9L487.2,294.0" stroke="#b4b400" stroke-width="2.9"/>
<path d="M468.9,288.0L487.2,293.1" stroke="#ecec00" stroke-width="2.3"/>
<path d="M534.7,290.7L555.3,299.5" stroke="#b4b400" stroke-width="3.3"/>
<path d="M534.7,289.8L555.3,298.6" stroke="#ecec00" stroke-width="2.6999999999999997"/>
<path d="M527.8,299.5L548.4,308.4" stroke="#b4b400" stroke-width="3.3"/>
<path d="M527.8,298.6L548.4,307.5" stroke="#ecec00" stroke-width="2.6999999999999997"/>
<path d="M521.0,308.0L540.6,317.2" stroke="#b4b400" stroke-width="3.3"/>
<path d="M521.0,307.1L540.6,316.3" stroke="#ecec00" stroke-width="2.6999999999999997"/>
</g>
</g>
</g></svg>
<div id="title"></div>
<div id="tabs"></div>
<div id="tline" class="abs" style="left:0;top:16px;width:1000px;height:1px;background:#1f2527"></div>
<div class="abs" style="left:22px;top:17px;width:72px;height:19px;background:#00ae42"></div>
<div id="side"></div>
<!-- section headers -->
<div class="hdr" style="top:36px;height:16px"></div>
<div class="hdr" style="top:101px;height:15px"></div>
<div class="hdr" style="top:152px;height:16px"></div>
<!-- combos -->
<div class="combo" style="left:3px;top:60px;width:200px;height:14px"></div>
<div class="combo" style="left:66px;top:77px;width:150px;height:15px"></div>
<div class="combo" style="left:18px;top:127px;width:78px;height:16px"></div>
<div class="combo" style="left:128px;top:127px;width:79px;height:16px"></div>
<div class="abs" style="left:5px;top:130px;width:10px;height:10.5px;background:#e4e4e4"></div>
<div class="abs" style="left:115px;top:130px;width:10px;height:10.5px;background:#ffff00"></div>
<!-- purge button -->
<div class="abs" style="left:88px;top:104px;width:54px;height:10px;border:1px solid #b9b9b9;border-radius:5px;background:#f4f4f4"></div>
<!-- mode toggle -->
<div class="abs" style="left:59px;top:155px;width:55px;height:11px;border-radius:6px;background:#dedede"></div>
<div class="abs" style="left:85px;top:155px;width:29px;height:11px;border-radius:6px;background:#00ae42"></div>
<!-- switch -->
<div class="abs" style="left:178px;top:156px;width:15px;height:9px;border-radius:5px;background:#00ae42"></div>
<div class="abs" style="left:185.5px;top:157px;width:7px;height:7px;border-radius:4px;background:#fff"></div>
<!-- object list panel -->
<div class="abs" style="left:1px;top:168px;width:221px;height:147.5px;background:#fff;border:1px solid #7c7c7c;border-top:none"></div>
<div class="abs" style="left:1px;top:168px;width:221px;height:13px;border:1px solid #7a7a7a;background:#fff"></div>
<div class="abs" style="left:2px;top:181px;width:219px;height:12px;background:#fff;border-bottom:1px solid #d8d8d8"></div>
<div class="abs" style="left:138px;top:181px;width:1px;height:12px;background:#ededed"></div>
<div class="abs" style="left:153px;top:181px;width:1px;height:12px;background:#ededed"></div>
<div class="abs" style="left:180px;top:181px;width:1px;height:12px;background:#ededed"></div>
<div class="abs" style="left:195px;top:181px;width:1px;height:12px;background:#ededed"></div>
<div class="abs" style="left:2px;top:194px;width:219px;height:11px;background:#a2a2a2"></div>
<div class="abs" style="left:156px;top:206px;width:23px;height:10px;background:#e4e4e4"></div>
<div class="abs" style="left:156px;top:217.5px;width:23px;height:10px;background:#e4e4e4"></div>
<div class="abs" style="left:156px;top:229px;width:23px;height:11px;background:#ffff00"></div>
<div class="abs" style="left:142px;top:207px;width:8px;height:8px;background:#00ae42;border-radius:1px"></div>
<!-- settings tab -->
<div class="abs" style="left:1px;top:328px;width:220px;height:1px;background:#d4d4d4"></div>
<div class="abs" style="left:6px;top:327px;width:75px;height:1px;background:#5cc293"></div>
<div class="combo" style="left:129px;top:335px;width:64px;height:14px"></div>
<div class="combo" style="left:129px;top:351px;width:64px;height:14px"></div>
<div class="abs" style="left:130px;top:370px;width:8px;height:8px;border:1px solid #d0d0d0;border-radius:1px;background:#fff"></div>
<div class="combo" style="left:129px;top:387px;width:64px;height:14px"></div>
<div class="combo" style="left:129px;top:413px;width:64px;height:14px"></div>
<!-- toolbar -->
<div class="abs" style="left:344px;top:36px;width:533px;height:26px;background:#f6f6f6"></div>
<!-- slice / print buttons -->
<div class="abs" style="left:860px;top:20px;width:50px;height:13px;border-radius:7px;background:#6e6e6e"></div>
<div class="abs" style="left:860px;top:20px;width:12.5px;height:13px;border-radius:7px 0 0 7px;background:#00ae42"></div>
<div class="abs" style="left:918px;top:20px;width:62px;height:13px;border-radius:7px;background:#00ae42"></div>
<div class="abs" style="left:930px;top:20px;width:1px;height:13px;background:#3b4446"></div>
<svg id="icons" width="1000" height="536" viewBox="0 0 1000 536" style="left:0;top:0" fill="none" stroke-linecap="round" stroke-linejoin="round">
<!-- title bar -->
<g stroke="#f2f2f2" stroke-width="1">
<path d="M8.2 5.5H16M8.2 8.6H16M8.2 11.7H16"/>
<path d="M39.6 7.6L42.5 10.2L45.4 7.6" stroke-width="0.9"/>
</g>
<path d="M56.3 2.5V14" stroke="#3d4648" stroke-width="1"/>
<!-- save -->
<path d="M68.6 5.2a0.7 0.7 0 0 1 0.7-0.7h5l2.4 2.4v5.2a0.7 0.7 0 0 1-0.7 0.7h-6.7a0.7 0.7 0 0 1-0.7-0.7z" stroke="#f2f2f2" stroke-width="0.9"/>
<path d="M69.6 9.3h6.2v3h-6.2z" fill="#f2f2f2" stroke="none"/>
<path d="M70.6 4.8h3.2v2.2h-3.2z" fill="#f2f2f2" stroke="none"/>
<!-- undo / redo -->
<path d="M89 8.1L93.2 4.9V6.9C96 6.9 97.8 8.6 97.8 11.6C96.9 10 95.6 9.4 93.2 9.4V11.4Z" fill="#f2f2f2" stroke="none"/>
<path d="M118.3 8.1L114.1 4.9V6.9C111.3 6.9 109.5 8.6 109.5 11.6C110.4 10 111.7 9.4 114.1 9.4V11.4Z" fill="#f2f2f2" stroke="none"/>
<!-- window buttons -->
<g stroke="#e8e8e8" stroke-width="0.9">
<path d="M951.3 8.3H957"/>
<rect x="967.6" y="5.3" width="7.2" height="6.2" rx="0.8"/><path d="M967.6 7.3H974.8"/>
<path d="M986.3 5.6L991.7 11M991.7 5.6L986.3 11"/>
</g>
<!-- home -->
<path d="M11.5 20.9L17 26.1H15.6V31.4H12.8V27.8H10.2V31.4H7.4V26.1H6Z" fill="#fff" stroke="none"/>
<!-- prepara cube -->
<g stroke="#fff" stroke-width="0.95" transform="translate(41 26.4) scale(0.92) translate(-41 -26.4)">
<path d="M41 21.6L45.3 24V28.9L41 31.3L36.7 28.9V24Z"/><path d="M36.9 24.1L41 26.4L45.1 24.1M41 26.4V31"/>
</g>
<!-- anteprima layers -->
<g stroke="#ececec" stroke-width="0.9" transform="translate(107.8 26.4) scale(0.86) translate(-107.8 -26.4)">
<path d="M107.8 21.8L112 23.9L107.8 26L103.6 23.9Z"/>
<path d="M103.6 25.6L107.8 27.7L112 25.6M103.6 27.3L107.8 29.4L112 27.3M103.6 29L107.8 31.1L112 29M103.6 23.9V29M112 23.9V29"/>
</g>
<!-- dispositivo -->
<g stroke="#ececec" stroke-width="0.8">
<rect x="172.4" y="22.2" width="4.2" height="3" rx="0.6"/><path d="M174.5 25.2V27M173.2 27.2H175.8"/>
<rect x="178.4" y="26.6" width="4.4" height="4.2" rx="0.7"/><path d="M179.4 29.2H181.8" stroke-width="1.2"/>
<path d="M179.2 22.6H182.4V24.6M173 29.2V30.8H175.8"/>
</g>
<!-- progetto -->
<g stroke="#ececec" stroke-width="0.8">
<rect x="249.3" y="22.2" width="9" height="8.4" rx="1"/><path d="M252.8 22.4V30.4M254.4 24.6H256.6M254.4 26.4H256.6M254.4 28.2H256.6"/>
</g>
<!-- calibrazione -->
<g stroke="#ececec" stroke-width="0.8">
<path d="M318.8 22.9L321.8 24.6V28L318.8 29.7L315.8 28V24.6Z"/><circle cx="318.8" cy="26.3" r="1.2"/>
</g>
<!-- button chevrons -->
<path d="M864.3 25.6L866.3 27.4L868.3 25.6M922.3 25.6L924.3 27.4L926.3 25.6" stroke="#fff" stroke-width="0.9"/>
<!-- printer icon -->
<rect x="6.2" y="39.8" width="8" height="6.6" rx="0.8" stroke="#6e6e6e" stroke-width="0.9"/>
<path d="M7.4 41.5h4.4v4h-4.4z" fill="#a7e6c8" stroke="none"/><path d="M8.2 44.2H11.2" stroke="#1f9e62" stroke-width="1"/><path d="M12.5 40V46.2" stroke="#6e6e6e" stroke-width="0.8"/>
<!-- gears -->
<g stroke="#5e5e5e" stroke-width="0.8">
<path d="M209.4 38.7L213.2 40.9V45.3L209.4 47.5L205.6 45.3V40.9Z"/><circle cx="209.4" cy="43.1" r="1.5"/>
<path d="M209.4 104.3L213.2 106.5V110.9L209.4 113.1L205.6 110.9V106.5Z"/><circle cx="209.4" cy="108.7" r="1.5"/>
</g>
<!-- edit icons -->
<g stroke="#6a6a6a" stroke-width="0.8">
<path d="M209 63.2H206.6a1.2 1.2 0 0 0-1.2 1.2v4.6a1.2 1.2 0 0 0 1.2 1.2h4.8a1.2 1.2 0 0 0 1.2-1.2V67M209 67L212.6 63.2"/>
<path d="M102.5 131.2H100.3a1.2 1.2 0 0 0-1.2 1.2v4.6a1.2 1.2 0 0 0 1.2 1.2h4.6a1.2 1.2 0 0 0 1.2-1.2V135M102.5 135L106.1 131.2"/>
<path d="M213.5 131.2H211.1a1.2 1.2 0 0 0-1.2 1.2v4.6a1.2 1.2 0 0 0 1.2 1.2h4.8a1.2 1.2 0 0 0 1.2-1.2V135M213.5 135L217.1 131.2"/>
</g>
<!-- combo chevrons -->
<g stroke="#8a8a8a" stroke-width="0.7">
<path d="M6.4 65.8L8.4 67.6L10.4 65.8"/><path d="M69.6 83.6L71.6 85.4L73.6 83.6"/>
<path d="M22 134.2L24 136L26 134.2"/><path d="M132.4 134.2L134.4 136L136.4 134.2"/>
<path d="M133.4 341.4L135.4 343.2L137.4 341.4"/><path d="M133.4 357.2L135.4 359L137.4 357.2"/><path d="M133.4 393.6L135.4 395.4L137.4 393.6"/><path d="M133.4 419.2L135.4 421L137.4 419.2"/>
</g>
<!-- filament spool -->
<path d="M8.2 105.2h3.8v6.6h-3.8z" fill="#96dfbd" stroke="none"/>
<path d="M7.8 105C6.6 106.6 6.6 110.4 7.8 112M12.4 105C13.6 106.6 13.6 110.4 12.4 112" stroke="#7a7a7a" stroke-width="0.9"/>
<!-- plus minus -->
<path d="M151 108.6H157.4M154.2 105.4V111.8M167.2 108.6H173.6" stroke="#666" stroke-width="0.8"/>
<!-- filament settings icon -->
<g stroke="#5e5e5e" stroke-width="0.8">
<path d="M188.2 106.2h7.6v5.8h-7.6zM188.2 108h7.6M189 105h6M191.4 108V112"/>
<circle cx="195" cy="111.2" r="2.1" fill="#f7f7f7"/><path d="M194.1 111.2L194.8 111.9L196 110.6" stroke-width="0.6"/>
</g>
<!-- process icon -->
<g stroke-width="0.9">
<path d="M7.4 158.2H14.2" stroke="#6a6a6a"/><path d="M6.8 160H14.8" stroke="#3db884"/><path d="M6.8 161.8H14.8" stroke="#6a6a6a"/><path d="M7.4 163.6H14.2" stroke="#3db884"/>
</g>
<!-- list icon -->
<g stroke="#5a5a5a" stroke-width="0.8"><rect x="199.4" y="156.3" width="8.2" height="8" rx="0.8"/><path d="M202.6 158.4H205.8M202.6 160.3H205.8M202.6 162.2H205.8"/><path d="M200.9 158.4H201M200.9 160.3H201M200.9 162.2H201"/></g>
<!-- compare icon -->
<g stroke="#62c79c" stroke-width="0.6"><circle cx="211.6" cy="159" r="1.2"/><circle cx="215.4" cy="158.4" r="0.8"/><path d="M211.6 160.2V163.4M211.6 161.6L215.8 163.4M213 160.6L215.2 159.4"/></g>
<!-- search icon -->
<circle cx="6.6" cy="174" r="2.3" stroke="#444" stroke-width="0.9"/><path d="M8.3 175.8L10.2 177.8" stroke="#444" stroke-width="1"/>
<!-- clear -->
<circle cx="213.8" cy="174.4" r="3.8" fill="#7d7d7d" stroke="none"/><path d="M212.2 172.8L215.4 176M215.4 172.8L212.2 176" stroke="#fff" stroke-width="0.9"/>
<!-- tree arrows -->
<g stroke="#2c2c2c" stroke-width="0.9">
<path d="M3.2 198.2L5 199.9L6.8 198.2"/><path d="M7.4 209.8L9.2 211.5L11 209.8"/><path d="M4.3 243.6L6 245.6L4.3 247.6" stroke-width="0.7"/>
</g>
<!-- checkbox tick -->
<path d="M144.2 211L145.8 212.6L148.6 209.6" stroke="#fff" stroke-width="0.9"/>
<!-- object icons -->
<g stroke-width="0.7">
<path d="M23.6 220.6H20.8a0.9 0.9 0 0 0-0.9 0.9v4.6a0.9 0.9 0 0 0 0.9 0.9h4.4a0.9 0.9 0 0 0 0.9-0.9V223.4" stroke="#8c8c8c"/><path d="M24 220.6H27M25.5 219.1V222.1" stroke="#1fa866"/>
<path d="M23.6 232H20.8a0.9 0.9 0 0 0-0.9 0.9v4.6a0.9 0.9 0 0 0 0.9 0.9h4.4a0.9 0.9 0 0 0 0.9-0.9V234.8" stroke="#8c8c8c"/><path d="M24 232H27M25.5 230.5V233.5" stroke="#1fa866"/>
</g>
<!-- support icon -->
<g stroke="#62c79c" stroke-width="0.6"><path d="M185.2 208L188.6 209.4M187 208.2V210.6M185 211C185 215 191.6 215 191.6 211C190 209.8 186.6 209.8 185 211Z"/></g>
<!-- lock -->
<path d="M205.6 233h5.4v4h-5.4z" fill="#f36b1c" stroke="none"/><path d="M206.8 233V231.6a1.5 1.5 0 0 1 3 0" stroke="#f36b1c" stroke-width="0.8"/>
<!--TB0--><!-- toolbar icons -->
<g stroke="#4c4c4c" stroke-width="0.9" fill="none">
<!-- add cube -->
<path d="M347.4 44H359.8V56.2H347.4ZM347.4 44L351 40.4H363.4L359.8 44M363.4 40.4V49"/>
<circle cx="363" cy="52.8" r="3.4" fill="#f6f6f6"/><path d="M361 52.8H365M363 50.8V54.8"/>
<!-- grid plus -->
<path d="M371.4 40.6H386V55.2H371.4ZM374.3 40.6V55.2M377.2 40.6V55.2M380.1 40.6V55.2M383 40.6V55.2M371.4 43.5H386M371.4 46.4H386M371.4 49.3H386M371.4 52.2H386" stroke-width="0.7"/>
<circle cx="385.4" cy="53" r="3.4" fill="#f6f6f6"/><path d="M383.4 53H387.4M385.4 51V55"/>
<!-- auto orient -->
<path d="M402.6 41.2L412.4 43L410.2 52.6L400.4 50.6Z"/><path d="M396.2 56.4H411.6" stroke-width="1.3"/>
<path d="M394.6 45.6H399.6M394.6 45.6L396 44.4M395.8 52.8L399.8 49.6M395.8 52.8V50.6M395.8 52.8H398" stroke-width="0.8"/>
<!-- arrange -->
<rect x="417.8" y="40.8" width="16.8" height="16" rx="1" stroke-width="1.5"/>
<path d="M420.4 43.4H432V46.2H420.4ZM420.4 48.4H423.6V54.4H420.4ZM425.6 48.4H432V50.6H425.6ZM425.6 52.2H432V54.4H425.6Z" stroke-width="0.8"/>
</g>
<g stroke="#d2d2d2" stroke-width="0.9" fill="none">
<!-- copy 0 -->
<path d="M446 41.4H455.4L458 44V54.6H446Z"/><path d="M449.4 44.2H458.8L461.6 47V57.4H449.4Z" fill="#f6f6f6"/>
<!-- paste P -->
<path d="M469 41.4H478.4L481 44V54.6H469Z"/><path d="M472.4 44.2H481.8L484.6 47V57.4H472.4Z" fill="#f6f6f6"/>
<!-- lines -->
<path d="M492.6 43H508.6M492.6 45.4H508.6M492.6 47.8H508.6M492.6 50.2H508.6M492.6 52.6H508.6M492.6 55H508.6" stroke-width="1.3" stroke="#dcdcdc"/>
<!-- move -->
<path d="M540 40.6L542.4 43.6H537.6ZM540 57.4L542.4 54.4H537.6ZM531 49L534 46.6V51.4ZM549 49L546 46.6V51.4ZM540 46.4V51.6M537.4 49H542.6" stroke-width="0.8"/>
<!-- rotate -->
<path d="M563 45L569.4 51.4L563 57.8L556.6 51.4Z"/><path d="M556.4 47.4A7.4 7.4 0 0 1 568.4 43.4M567 41.4L571.6 42.4L569.6 46.6Z" stroke-width="0.8"/>
<!-- scale -->
<path d="M578.4 48.4H588.4V57.2H578.4Z"/><path d="M578.4 46V40.8H596V57.2H590.6" stroke-dasharray="1.4 1.4" stroke-width="0.8"/><path d="M590 46.6L594 42.8M594 42.8H591.4M594 42.8V45.2" stroke-width="0.8"/>
<!-- lay flat -->
<path d="M609.6 41.2L620 43.4L617.6 52.8L607.4 50.6Z"/><path d="M603.4 56.4H619.4" stroke-width="1.3"/><path d="M602.6 51L605.6 49.2V53Z" stroke-width="0.8"/>
<!-- cut -->
<path d="M626.6 40.8H642.8V47.4H626.6ZM626.6 49.4H642.8V57H626.6Z"/>
<!-- boolean -->
<path d="M649.6 45.2H661.4V57H649.6ZM655.6 40.8H667.6V52.6H655.6Z"/><path d="M655.6 45.2H661.4V52.6H655.6Z" fill="#dedede" stroke="none"/>
<!-- support -->
<path d="M674 41H690.6V57H684.4V48H680.4"/><path d="M678.2 48.2H682.8V57H678.2Z" fill="#dadada"/>
<!-- cube -->
<path d="M697 44.4H710V56.6H697ZM697 44.4L701.4 40.8H714.4L710 44.4M714.4 40.8V53L710 56.6"/><path d="M697.4 44.8L709.6 56.2" stroke-width="0.5"/>
<!-- T -->
<path d="M721.4 40.8H734.8V44.2H730V57H726.2V44.2H721.4Z"/><circle cx="735.6" cy="54.6" r="2.2" stroke-width="0.8"/>
<!-- bucket -->
<path d="M744.6 48L752.4 41.8L760 49.4L752.4 56.6ZM745 48.4H759.6M746.6 41L753.6 47.6" /><path d="M760.6 51.6C759 54 758.8 55.6 760.6 56.8C762.4 55.6 762.2 54 760.6 51.6Z" stroke-width="0.8"/>
<!-- ruler -->
<rect x="768.8" y="45.4" width="16.4" height="7.4" rx="0.8"/><path d="M771.6 45.6V47.8M774.2 45.6V47.8M776.8 45.6V48.6M779.4 45.6V47.8M782 45.6V47.8" stroke-width="0.6"/>
<!-- assemble -->
<path d="M794 50.2H810.2V56.4H794Z"/><path d="M797 45.6L806.6 42L808.4 46.6L798.8 50.2Z"/><path d="M793 49L796.4 46.8" stroke-width="0.8"/>
<!-- frame -->
<rect x="817" y="43" width="15" height="12.4" rx="1.4"/><circle cx="817.4" cy="43.4" r="1.6" fill="#f6f6f6" stroke-width="0.7"/><circle cx="831.6" cy="43.4" r="1.6" fill="#f6f6f6" stroke-width="0.7"/><circle cx="817.4" cy="55" r="1.6" fill="#f6f6f6" stroke-width="0.7"/><circle cx="831.6" cy="55" r="1.6" fill="#f6f6f6" stroke-width="0.7"/>
</g>
<path d="M520.5 41V57" stroke="#8c8c8c" stroke-width="0.9"/><path d="M844.2 41V56.4" stroke="#9a9a9a" stroke-width="0.9"/>
<!-- puzzle -->
<g stroke="#4a4a4a" stroke-width="0.9" fill="none">
<path d="M855.6 45.8H862V57H855.6ZM862 51H868.4V57H862Z"/><path d="M855.6 51.6L858 50.6L860 52.2L862 51"/>
<path d="M862 45.8C863.6 44.6 864.6 46.4 863.6 47.6C864.8 48.4 866.4 47.8 865.8 46"/>
<path d="M864.2 43.8L868.2 40.4L872.4 44.8L868.6 48.6C867.6 47.2 866 47.6 866.4 49.2L864.8 50.6"/>
</g>
<!--TB1-->
</svg>
<span class="t" style="left:18.5px;top:4.62px;font-size:7.2px;line-height:8.35px;color:#f4f4f4;font-weight:400;transform:scaleX(0.8194);transform-origin:0 50%;-webkit-text-stroke:0.3px #f4f4f4;">File</span>
<span class="t" style="left:522.5px;top:4.64px;font-size:7.0px;line-height:8.12px;color:#d4d4d4;font-weight:400;transform:scaleX(0.8345);transform-origin:0 50%;">1010</span>
<span class="t" style="left:51.0px;top:21.29px;font-size:8.3px;line-height:9.63px;color:#ffffff;font-weight:400;transform:scaleX(0.9820);transform-origin:0 50%;">Prepara</span>
<span class="t" style="left:118.0px;top:21.29px;font-size:8.3px;line-height:9.63px;color:#f0f0f0;font-weight:400;transform:scaleX(1.0045);transform-origin:0 50%;">Anteprima</span>
<span class="t" style="left:187.0px;top:21.29px;font-size:8.3px;line-height:9.63px;color:#f0f0f0;font-weight:400;transform:scaleX(1.0467);transform-origin:0 50%;">Dispositivo</span>
<span class="t" style="left:263.0px;top:21.29px;font-size:8.3px;line-height:9.63px;color:#f0f0f0;font-weight:400;transform:scaleX(1.0518);transform-origin:0 50%;">Progetto</span>
<span class="t" style="left:328.0px;top:21.29px;font-size:8.3px;line-height:9.63px;color:#f0f0f0;font-weight:400;transform:scaleX(0.9973);transform-origin:0 50%;">Calibrazione</span>
<span class="t" style="left:881.0px;top:21.59px;font-size:8.3px;line-height:9.63px;color:#a8a8a8;font-weight:400;transform:scaleX(1.0009);transform-origin:0 50%;">Slice</span>
<span class="t" style="left:939.0px;top:21.59px;font-size:8.3px;line-height:9.63px;color:#ffffff;font-weight:400;transform:scaleX(1.0142);transform-origin:0 50%;">Stampa</span>
<span class="t" style="left:19.5px;top:38.94px;font-size:8.2px;line-height:9.51px;color:#3c3c3c;font-weight:400;transform:scaleX(0.9972);transform-origin:0 50%;">Stampante</span>
<span class="t" style="left:13.5px;top:62.00px;font-size:8.1px;line-height:9.40px;color:#3c3c3c;font-weight:400;transform:scaleX(0.9882);transform-origin:0 50%;">* Bambu Lab A1 0.4 nozzle</span>
<span class="t" style="left:6.0px;top:79.40px;font-size:8.1px;line-height:9.40px;color:#222;font-weight:400;transform:scaleX(1.0641);transform-origin:0 50%;-webkit-text-stroke:0.25px #222;">Tipo di piatto</span>
<span class="t" style="left:77.0px;top:79.40px;font-size:8.1px;line-height:9.40px;color:#3c3c3c;font-weight:400;transform:scaleX(0.9963);transform-origin:0 50%;">Textured PEI Plate</span>
<span class="t" style="left:19.5px;top:104.44px;font-size:8.2px;line-height:9.51px;color:#3c3c3c;font-weight:400;transform:scaleX(1.0013);transform-origin:0 50%;">Filamento</span>
<span class="t" style="left:92.0px;top:105.25px;font-size:6.3px;line-height:7.31px;color:#5a5a5a;font-weight:400;transform:scaleX(0.9879);transform-origin:0 50%;">Volumi di spurgo</span>
<span class="t" style="left:7.6px;top:131.04px;font-size:7.0px;line-height:8.12px;color:#333;font-weight:400;">1</span>
<span class="t" style="left:29.0px;top:130.57px;font-size:7.3px;line-height:8.47px;color:#3c3c3c;font-weight:400;transform:scaleX(0.9414);transform-origin:0 50%;">Bambu PLA Basic</span>
<span class="t" style="left:118.5px;top:131.04px;font-size:7.0px;line-height:8.12px;color:#222;font-weight:400;">2</span>
<span class="t" style="left:139.5px;top:130.57px;font-size:7.3px;line-height:8.47px;color:#3c3c3c;font-weight:400;transform:scaleX(0.9428);transform-origin:0 50%;">Bambu TPU 95A</span>
<span class="t" style="left:20.5px;top:155.26px;font-size:8.0px;line-height:9.28px;color:#3c3c3c;font-weight:400;transform:scaleX(0.9742);transform-origin:0 50%;">Processo</span>
<span class="t" style="left:63.0px;top:156.63px;font-size:6.5px;line-height:7.54px;color:#666;font-weight:400;transform:scaleX(0.9372);transform-origin:0 50%;">Globale</span>
<span class="t" style="left:89.0px;top:156.69px;font-size:6.4px;line-height:7.42px;color:#ffffff;font-weight:700;transform:scaleX(0.9385);transform-origin:0 50%;">Oggetti</span>
<span class="t" style="left:143.0px;top:155.46px;font-size:8.0px;line-height:9.28px;color:#3c3c3c;font-weight:400;transform:scaleX(0.9934);transform-origin:0 50%;">Avanzato</span>
<span class="t" style="left:14.0px;top:170.30px;font-size:6.9px;line-height:8.00px;color:#555;font-weight:400;transform:scaleX(0.9074);transform-origin:0 50%;">Cerca piatto, oggetto e parte.</span>
<span class="t" style="left:4.5px;top:182.98px;font-size:7.1px;line-height:8.24px;color:#2a2a2a;font-weight:400;transform:scaleX(0.9769);transform-origin:0 50%;">Nome</span>
<span class="t" style="left:161.0px;top:183.04px;font-size:7.0px;line-height:8.12px;color:#2a2a2a;font-weight:400;transform:scaleX(0.8916);transform-origin:0 50%;">Fila.</span>
<span class="t" style="left:11.0px;top:195.32px;font-size:7.2px;line-height:8.35px;color:#222;font-weight:400;transform:scaleX(1.0051);transform-origin:0 50%;">Piatto 1</span>
<span class="t" style="left:15.5px;top:207.02px;font-size:7.2px;line-height:8.35px;color:#222;font-weight:400;transform:scaleX(0.9226);transform-origin:0 50%;">mouse.stl_A</span>
<span class="t" style="left:164.8px;top:207.04px;font-size:7.0px;line-height:8.12px;color:#333;font-weight:700;">1</span>
<span class="t" style="left:30.0px;top:219.02px;font-size:7.2px;line-height:8.35px;color:#222;font-weight:400;transform:scaleX(0.9751);transform-origin:0 50%;">mouse.stl</span>
<span class="t" style="left:164.8px;top:218.54px;font-size:7.0px;line-height:8.12px;color:#333;font-weight:700;">1</span>
<span class="t" style="left:30.0px;top:230.12px;font-size:7.2px;line-height:8.35px;color:#222;font-weight:400;transform:scaleX(0.9658);transform-origin:0 50%;">Frantic Leelo.stl</span>
<span class="t" style="left:165.0px;top:230.04px;font-size:7.0px;line-height:8.12px;color:#222;font-weight:700;">2</span>
<span class="t" style="left:11.0px;top:241.82px;font-size:7.2px;line-height:8.35px;color:#222;font-weight:400;transform:scaleX(0.9887);transform-origin:0 50%;">Esterno</span>
<span class="t" style="left:8.0px;top:316.92px;font-size:7.9px;line-height:9.16px;color:#2a2a2a;font-weight:700;transform:scaleX(0.9883);transform-origin:0 50%;">Impostazioni Piatto</span>
<span class="t" style="left:13.5px;top:337.60px;font-size:8.1px;line-height:9.40px;color:#3c3c3c;font-weight:400;transform:scaleX(1.0750);transform-origin:0 50%;">Tipo di piatto</span>
<span class="t" style="left:140.0px;top:337.60px;font-size:8.1px;line-height:9.40px;color:#3c3c3c;font-weight:400;transform:scaleX(0.9606);transform-origin:0 50%;">Textured PEI...</span>
<span class="t" style="left:13.5px;top:353.40px;font-size:8.1px;line-height:9.40px;color:#3c3c3c;font-weight:400;transform:scaleX(0.9960);transform-origin:0 50%;">Sequenza di stampa</span>
<span class="t" style="left:140.0px;top:353.40px;font-size:8.1px;line-height:9.40px;color:#3c3c3c;font-weight:400;transform:scaleX(0.9879);transform-origin:0 50%;">Per layer</span>
<span class="t" style="left:13.5px;top:369.40px;font-size:8.1px;line-height:9.40px;color:#3c3c3c;font-weight:400;transform:scaleX(0.9960);transform-origin:0 50%;">Vaso a spirale</span>
<span class="t" style="left:13.5px;top:385.00px;font-size:8.1px;line-height:9.40px;color:#3c3c3c;font-weight:400;transform:scaleX(1.0156);transform-origin:0 50%;">Sequenza filamento primo</span>
<span class="t" style="left:13.5px;top:394.80px;font-size:8.1px;line-height:9.40px;color:#3c3c3c;font-weight:400;transform:scaleX(0.9973);transform-origin:0 50%;">layer</span>
<span class="t" style="left:140.0px;top:390.00px;font-size:8.1px;line-height:9.40px;color:#3c3c3c;font-weight:400;transform:scaleX(1.0617);transform-origin:0 50%;">Automatico</span>
<span class="t" style="left:13.5px;top:410.60px;font-size:8.1px;line-height:9.40px;color:#3c3c3c;font-weight:400;transform:scaleX(1.0245);transform-origin:0 50%;">Other layers filament</span>
<span class="t" style="left:13.5px;top:420.40px;font-size:8.1px;line-height:9.40px;color:#3c3c3c;font-weight:400;transform:scaleX(0.9684);transform-origin:0 50%;">sequence</span>
<span class="t" style="left:140.0px;top:415.40px;font-size:8.1px;line-height:9.40px;color:#3c3c3c;font-weight:400;transform:scaleX(1.0617);transform-origin:0 50%;">Automatico</span>
<span class="t" style="left:453.5px;top:46.89px;font-size:7.6px;line-height:8.82px;color:#d0d0d0;font-weight:400;">0</span>
<span class="t" style="left:476.0px;top:46.89px;font-size:7.6px;line-height:8.82px;color:#d0d0d0;font-weight:400;">P</span>
<div id="frame"></div><div id="frameL"></div>
</div>
</body></html>
